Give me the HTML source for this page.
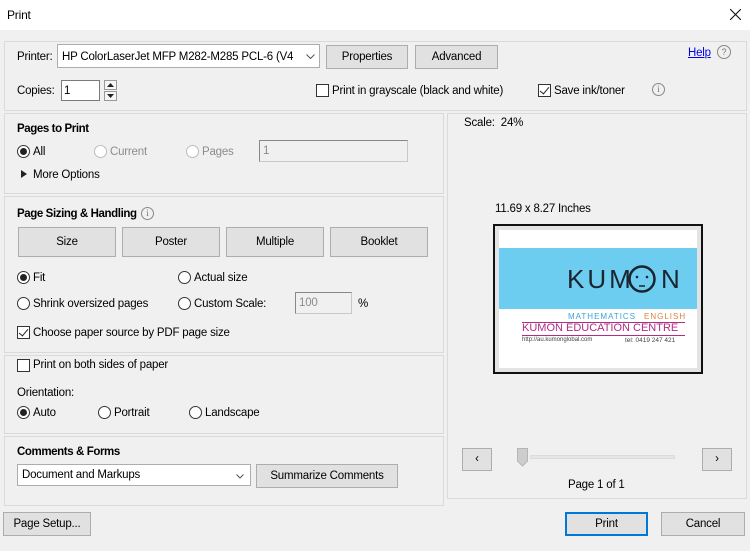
<!DOCTYPE html>
<html><head><meta charset="utf-8">
<style>
*{box-sizing:border-box;margin:0;padding:0}
body{width:750px;height:551px;background:#f0f0f0;font-family:"Liberation Sans",sans-serif;font-size:11.5px;letter-spacing:-0.2px;color:#000;position:relative;overflow:hidden}
.a{position:absolute;white-space:nowrap}
.t{margin-top:1px}
.panel{position:absolute;border:1px solid #dadada;background:#f0f0f0}
.btn{position:absolute;background:#e1e1e1;border:1px solid #adadad;text-align:center}
.rad{position:absolute;width:13px;height:13px;border:1px solid #333;border-radius:50%;background:#fff}
.rad.on::after{content:"";position:absolute;left:2px;top:2px;width:7px;height:7px;border-radius:50%;background:#222}
.rad.dis{border-color:#bcbcbc}
.cb{position:absolute;width:13px;height:13px;border:1px solid #333;background:#fff}
.cb.on::after{content:"";position:absolute;left:3px;top:0px;width:4px;height:8px;border:solid #222;border-width:0 1.5px 1.5px 0;transform:rotate(40deg)}
.b{font-weight:bold;letter-spacing:-0.4px}
.info{position:absolute;width:13px;height:13px;border:1px solid #888;border-radius:50%;font-size:9px;color:#777;text-align:center;line-height:11px;font-family:"Liberation Serif",serif;letter-spacing:0}
.inp{position:absolute;background:#fff;border:1px solid #7a7a7a}
.gray{color:#8c8c8c}
</style></head><body>
<div class="a" style="left:0;top:0;width:750px;height:30px;background:#fff"></div>
<div class="a" style="left:7px;top:8px;font-size:12px">Print</div>
<svg class="a" style="left:730px;top:9px" width="11" height="11"><path d="M0 0L11 11M11 0L0 11" stroke="#111" stroke-width="1.1"/></svg>

<div class="panel" style="left:4px;top:41px;width:743px;height:70px"></div>
<div class="a t" style="left:17px;top:50px">Printer:</div>
<div class="inp" style="left:57px;top:44px;width:263px;height:24px;border-color:#adadad"></div>
<div class="a t" style="left:62px;top:50px;width:238px;overflow:hidden">HP ColorLaserJet MFP M282-M285 PCL-6 (V4</div>
<svg class="a" style="left:306px;top:54px" width="9" height="6"><path d="M0.5 0.5L4.5 4.5L8.5 0.5" stroke="#555" fill="none"/></svg>
<div class="btn" style="left:326px;top:45px;width:82px;height:24px;line-height:23px">Properties</div>
<div class="btn" style="left:415px;top:45px;width:83px;height:24px;line-height:23px">Advanced</div>
<div class="a t" style="left:688px;top:46px;color:#0000ee;text-decoration:underline">Help</div>
<div class="info" style="left:717px;top:45px;width:14px;height:14px;line-height:12px;font-family:'Liberation Sans'">?</div>
<div class="a t" style="left:17px;top:84px">Copies:</div>
<div class="inp" style="left:61px;top:80px;width:39px;height:21px"></div>
<div class="a t" style="left:64px;top:84px">1</div>
<div class="a" style="left:104px;top:80px;width:13px;height:10px;border:1px solid #999;background:#f6f6f6"></div>
<div class="a" style="left:104px;top:91px;width:13px;height:10px;border:1px solid #999;background:#f6f6f6"></div>
<svg class="a" style="left:107px;top:83px" width="7" height="4"><path d="M0 4L3.5 0L7 4Z" fill="#222"/></svg>
<svg class="a" style="left:107px;top:94px" width="7" height="4"><path d="M0 0L3.5 4L7 0Z" fill="#222"/></svg>
<div class="cb" style="left:316px;top:84px"></div>
<div class="a t" style="left:332px;top:84px">Print in grayscale (black and white)</div>
<div class="cb on" style="left:538px;top:84px"></div>
<div class="a t" style="left:554px;top:84px">Save ink/toner</div>
<div class="info" style="left:652px;top:83px">i</div>

<div class="panel" style="left:4px;top:113px;width:440px;height:81px"></div>
<div class="a b t" style="left:17px;top:122px">Pages to Print</div>
<div class="rad on" style="left:17px;top:145px"></div><div class="a t" style="left:33px;top:145px">All</div>
<div class="rad dis" style="left:94px;top:145px"></div><div class="a gray t" style="left:110px;top:145px">Current</div>
<div class="rad dis" style="left:186px;top:145px"></div><div class="a gray t" style="left:202px;top:145px">Pages</div>
<div class="a" style="left:259px;top:140px;width:149px;height:22px;background:#f0f0f0;border:1px solid #c8c8c8;border-top-color:#888;border-left-color:#888"></div>
<div class="a gray t" style="left:263px;top:144px">1</div>
<svg class="a" style="left:21px;top:170px" width="6" height="8"><path d="M0 0L6 4L0 8Z" fill="#222"/></svg>
<div class="a t" style="left:33px;top:168px">More Options</div>

<div class="panel" style="left:4px;top:196px;width:440px;height:157px"></div>
<div class="a b t" style="left:17px;top:207px">Page Sizing &amp; Handling</div>
<div class="info" style="left:141px;top:207px">i</div>
<div class="btn" style="left:18px;top:227px;width:98px;height:30px;line-height:29px">Size</div>
<div class="btn" style="left:122px;top:227px;width:98px;height:30px;line-height:29px">Poster</div>
<div class="btn" style="left:226px;top:227px;width:98px;height:30px;line-height:29px">Multiple</div>
<div class="btn" style="left:330px;top:227px;width:98px;height:30px;line-height:29px">Booklet</div>
<div class="rad on" style="left:17px;top:271px"></div><div class="a t" style="left:33px;top:271px">Fit</div>
<div class="rad" style="left:178px;top:271px"></div><div class="a t" style="left:194px;top:271px">Actual size</div>
<div class="rad" style="left:17px;top:297px"></div><div class="a t" style="left:33px;top:297px">Shrink oversized pages</div>
<div class="rad" style="left:178px;top:297px"></div><div class="a t" style="left:194px;top:297px">Custom Scale:</div>
<div class="a" style="left:295px;top:292px;width:57px;height:22px;background:#f0f0f0;border:1px solid #c8c8c8;border-top-color:#888;border-left-color:#888"></div>
<div class="a gray t" style="left:299px;top:296px">100</div>
<div class="a t" style="left:358px;top:297px">%</div>
<div class="cb on" style="left:17px;top:326px"></div><div class="a t" style="left:33px;top:326px">Choose paper source by PDF page size</div>

<div class="panel" style="left:4px;top:355px;width:440px;height:79px"></div>
<div class="cb" style="left:17px;top:359px"></div><div class="a t" style="left:33px;top:358px">Print on both sides of paper</div>
<div class="a t" style="left:17px;top:386px">Orientation:</div>
<div class="rad on" style="left:17px;top:406px"></div><div class="a t" style="left:33px;top:406px">Auto</div>
<div class="rad" style="left:98px;top:406px"></div><div class="a t" style="left:114px;top:406px">Portrait</div>
<div class="rad" style="left:189px;top:406px"></div><div class="a t" style="left:205px;top:406px">Landscape</div>

<div class="panel" style="left:4px;top:436px;width:440px;height:70px"></div>
<div class="a b t" style="left:17px;top:445px">Comments &amp; Forms</div>
<div class="inp" style="left:17px;top:464px;width:234px;height:22px;border-color:#adadad"></div>
<div class="a t" style="left:22px;top:468px">Document and Markups</div>
<svg class="a" style="left:236px;top:474px" width="8" height="5"><path d="M0.5 0.5L4 4L7.5 0.5" stroke="#555" fill="none"/></svg>
<div class="btn" style="left:256px;top:464px;width:142px;height:24px;line-height:23px">Summarize Comments</div>

<div class="panel" style="left:447px;top:113px;width:300px;height:386px"></div>
<div class="a t" style="left:464px;top:116px">Scale:&nbsp; 24%</div>
<div class="a t" style="left:495px;top:202px">11.69 x 8.27 Inches</div>
<div class="a" style="left:493px;top:224px;width:210px;height:150px;border:2px solid #111;background:#e3e3e3"></div>
<div class="a" style="left:499px;top:230px;width:198px;height:138px;background:#fff"></div>
<div class="a" style="left:499px;top:248px;width:198px;height:61px;background:#6dcdf0"></div>
<div class="a" style="left:567px;top:264px;font-size:26px;letter-spacing:3px;color:#1a2530">KUM</div>
<svg class="a" style="left:626px;top:264px" width="32" height="30"><circle cx="16" cy="15" r="12.5" stroke="#1a2530" stroke-width="2.5" fill="none"/><circle cx="11" cy="13" r="1.3" fill="#1a2530"/><circle cx="21" cy="13" r="1.3" fill="#1a2530"/><path d="M13 22h6" stroke="#1a2530" stroke-width="1.5"/></svg>
<div class="a" style="left:661px;top:264px;font-size:26px;color:#1a2530">N</div>
<div class="a" style="left:568px;top:312px;font-size:8px;letter-spacing:1px;color:#3aa5d8">MATHEMATICS</div>
<div class="a" style="left:644px;top:312px;font-size:8px;letter-spacing:1px;color:#e08040">ENGLISH</div>
<div class="a" style="left:522px;top:322px;width:163px;border-top:1px solid #b03080"></div>
<div class="a" style="left:522px;top:322px;font-size:11px;letter-spacing:0;color:#b02a85">KUMON EDUCATION CENTRE</div>
<div class="a" style="left:522px;top:335px;width:163px;border-top:1px solid #b03080"></div>
<div class="a" style="left:522px;top:337px;font-size:6px;letter-spacing:0;color:#444">http://au.kumonglobal.com</div>
<div class="a" style="left:625px;top:337px;font-size:6.5px;letter-spacing:0;color:#444">tel: 0419 247 421</div>

<div class="btn" style="left:462px;top:448px;width:30px;height:23px;line-height:21px">&lsaquo;</div>
<div class="a" style="left:530px;top:455px;width:145px;height:4px;background:#e6e6e6;border:1px solid #dcdcdc"></div>
<svg class="a" style="left:517px;top:448px" width="11" height="19"><path d="M0.5 0.5H10.5V13L5.5 18L0.5 13Z" fill="#cdcdcd" stroke="#b5b5b5"/></svg>
<div class="btn" style="left:702px;top:448px;width:30px;height:23px;line-height:21px">&rsaquo;</div>
<div class="a t" style="left:568px;top:478px">Page 1 of 1</div>

<div class="btn" style="left:3px;top:512px;width:88px;height:24px;line-height:23px">Page Setup...</div>
<div class="btn" style="left:565px;top:512px;width:83px;height:24px;line-height:21px;border:2px solid #0078d7">Print</div>
<div class="btn" style="left:661px;top:512px;width:84px;height:24px;line-height:23px">Cancel</div>
</body></html>
